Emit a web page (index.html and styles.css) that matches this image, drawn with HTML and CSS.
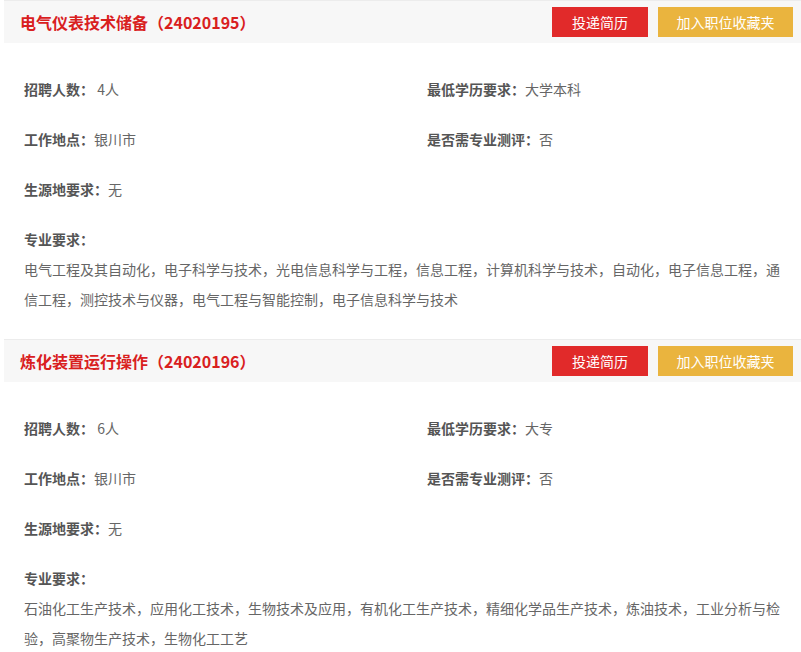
FILE: index.html
```html
<!DOCTYPE html>
<html lang="zh-CN">
<head>
    <meta charset="UTF-8">
    <meta name="viewport" content="width=device-width, initial-scale=1.0">
    <title>职位列表</title>
    <link rel="stylesheet" href="styles.css">
</head>
<body>
    <div class="job-list">
        <div class="job">
            <div class="job-head">
                <h2 class="job-title">电气仪表技术储备（24020195）</h2>
                <div class="job-actions">
                    <button class="btn btn-apply">投递简历</button>
                    <button class="btn btn-collect">加入职位收藏夹</button>
                </div>
            </div>
            <div class="job-body">
                <ul class="job-info">
                    <li><b>招聘人数：</b> 4人</li>
                    <li><b>最低学历要求：</b>大学本科</li>
                    <li><b>工作地点：</b>银川市</li>
                    <li><b>是否需专业测评：</b>否</li>
                    <li><b>生源地要求：</b>无</li>
                </ul>
                <div class="major">
                    <b>专业要求：</b>
                    <p>电气工程及其自动化，电子科学与技术，光电信息科学与工程，信息工程，计算机科学与技术，自动化，电子信息工程，通信工程，测控技术与仪器，电气工程与智能控制，电子信息科学与技术</p>
                </div>
            </div>
        </div>

        <div class="job">
            <div class="job-head">
                <h2 class="job-title">炼化装置运行操作（24020196）</h2>
                <div class="job-actions">
                    <button class="btn btn-apply">投递简历</button>
                    <button class="btn btn-collect">加入职位收藏夹</button>
                </div>
            </div>
            <div class="job-body">
                <ul class="job-info">
                    <li><b>招聘人数：</b> 6人</li>
                    <li><b>最低学历要求：</b>大专</li>
                    <li><b>工作地点：</b>银川市</li>
                    <li><b>是否需专业测评：</b>否</li>
                    <li><b>生源地要求：</b>无</li>
                </ul>
                <div class="major">
                    <b>专业要求：</b>
                    <p>石油化工生产技术，应用化工技术，生物技术及应用，有机化工生产技术，精细化学品生产技术，炼油技术，工业分析与检验，高聚物生产技术，生物化工工艺</p>
                </div>
            </div>
        </div>
    </div>
</body>
</html>
```

FILE: styles.css
```css
body {
    margin: 0;
    font-family: 'Noto Sans CJK SC', 'Microsoft YaHei', sans-serif;
    font-size: 14px;
    color: #666;
    background: #fff;
}

.job-list {
    padding-left: 4px;
}

.job-head {
    display: flex;
    align-items: center;
    justify-content: space-between;
    height: 42px;
    border-top: 1px solid #ececec;
    background-color: #f7f7f7;
    padding: 0 8px 0 16px;
}

.job-title {
    margin: 0;
    font-size: 16px;
    font-weight: bold;
    color: #d9201e;
}

.job-actions {
    display: flex;
    gap: 10px;
}

.btn {
    height: 30px;
    border: none;
    padding: 0;
    color: #fff;
    font-family: inherit;
    font-size: 14px;
    cursor: pointer;
}

.btn-apply {
    width: 96px;
    background-color: #e12a2a;
}

.btn-collect {
    width: 135px;
    background-color: #eab43e;
}

.job-body {
    padding: 21px 20px 25px 20px;
}

.job-info {
    display: grid;
    grid-template-columns: 403px 1fr;
    margin: 0;
    padding: 0;
    list-style: none;
}

.job-info li {
    height: 50px;
    line-height: 50px;
}

.job-info b,
.major b {
    color: #555;
}

.major {
    margin-top: 10px;
    line-height: 30px;
}

.major p {
    margin: 0;
}
```
